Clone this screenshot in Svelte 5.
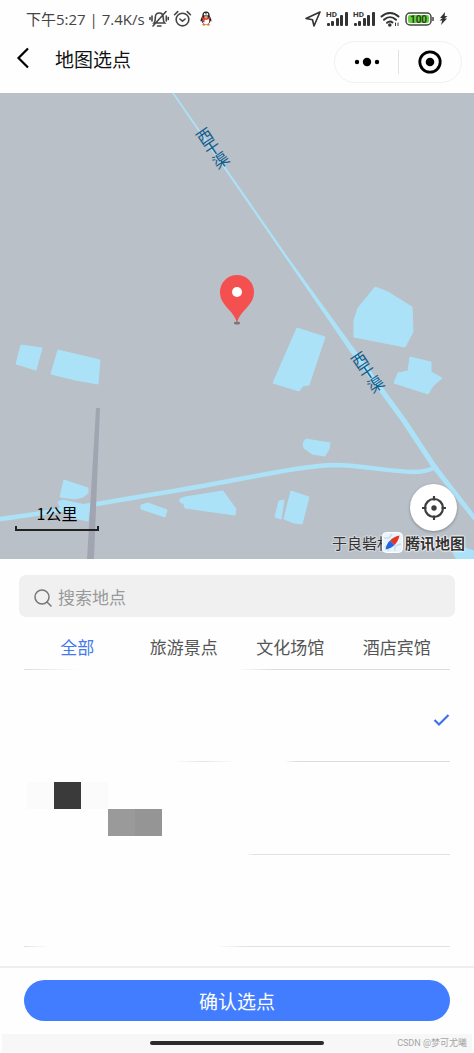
<script lang="ts">
	const water = [
		'21,252 42,255 36,277 16,271',
		'58,257 100,267 98,291 75,287 51,281',
		'64,387 88,395 88,400 83,404 75,406 60,404',
		'58,409 63,407 90,413 88,428 78,426 62,418',
		'141,412 148,410 167,417 165,424 141,416',
		'180,406 185,404 223,398 236,416 235,422 185,415 184,411 180,409',
		'306,346 330,350 329,356 325,363 312,361 304,355 303,350',
		'291,398 309,404 302,431 294,430 284,426',
		'279,408 284,407 281,426 275,424',
		'297,235 325,244 309,292 303,293 299,298 273,290',
		'375,194 388,199 412,214 413,239 405,254 354,244 354,227 358,215 367,204',
		'410,264 431,269 431,279 442,285 433,293 428,301 394,290 398,280 408,278',
		'453,460 461,454 475,458 475,467 457,467'
	];

	const canalLabels = [
		{ x: 205, y: 44 },
		{ x: 360, y: 268 }
	];

	const tabs = ['全部', '旅游景点', '文化场馆', '酒店宾馆'];
	let activeTab = $state('全部');

	const places = [
		{ id: 1, line: 'line-b' },
		{ id: 2, line: 'line-c' },
		{ id: 3, line: 'line-d' }
	];
	let selected = $state(1);
	let keyword = $state('');
</script>

{#snippet signal()}
	<svg class="signal" width="22" height="16" viewBox="0 0 22 16" fill="#333">
		<text x="0" y="6" font-size="8">HD</text>
		<rect x="1" y="12" width="3" height="3" rx="1" />
		<rect x="5" y="10" width="3" height="5" rx="1" />
		<rect x="10" y="7" width="3" height="8" rx="1" />
		<rect x="14" y="4" width="3" height="11" rx="1" />
		<rect x="19" y="1" width="3" height="14" rx="1" />
	</svg>
{/snippet}

<div class="page">
	<header>
		<div class="status">
			<div class="status-left">
				<span>下午5:27 | 7.4K/s</span>
				<svg width="20" height="18" viewBox="0 0 20 18" fill="none" stroke="#444" stroke-width="1.6" stroke-linecap="round">
					<path d="M5 13c1.4-1.500 1.300-3 1.300-5.500C6.300 4.500 8 3 10.200 3s4 1.500 4 4.500c0 2.500 0 4 1.500 5.500ZM8.500 16h3.500M4 16 17 1.500M3 6v5M1 7.500v2M17.300 6v5M19.300 7.500v2" />
				</svg>
				<svg width="19" height="18" viewBox="0 0 17 17" fill="none" stroke="#444" stroke-width="1.500" stroke-linecap="round" stroke-linejoin="round">
					<circle cx="8.500" cy="9" r="6" />
					<path d="M6 8.500 8.500 10.500 11 8.500M1 4.500 4 1.500M16 4.500l-3-3" />
				</svg>
				<svg class="penguin" width="12" height="15" viewBox="0 0 12 15">
					<path d="M6 0.500C3.300 0.500 2.200 2.600 2.300 5 1.200 7 0.300 8.700 0.600 10.500L1.600 9.900C2 12 3.500 13.500 6 13.500s4-1.500 4.400-3.600l1 .6c.3-1.800-.6-3.500-1.700-5.500C9.800 2.600 8.700 .5 6 .5Z" fill="#25272c" />
					<ellipse cx="6" cy="9.800" rx="3.300" ry="3.500" fill="#fff" />
					<ellipse cx="4.800" cy="3.200" rx="0.900" ry="1.300" fill="#fff" />
					<ellipse cx="7.200" cy="3.200" rx="0.900" ry="1.300" fill="#fff" />
					<ellipse cx="6" cy="5.200" rx="2" ry="0.700" fill="#f6a524" />
					<path d="M2 6c2.500 1.500 5.500 1.500 8 0l.3 1.600c-2 1.200-4 1.400-5.600 1.200l-.2 2.400H2.900l.3-2.900-1.500-.7Z" fill="#e9342c" />
					<path d="M2 13.800c0-1.200 3.500-1.200 3.500 0S2 14.800 2 13.800ZM6.500 13.800c0-1.200 3.500-1.200 3.500 0s-3.500 1-3.500 0Z" fill="#ee7625" />
				</svg>
			</div>
			<div class="status-right">
				<svg width="16" height="16" viewBox="0 0 16 16" fill="none" stroke="#333" stroke-width="1.600" stroke-linejoin="round">
					<path d="M15 1 1 7.500l6.500 1.300L9 15Z" />
				</svg>
				{@render signal()}
				{@render signal()}
				<svg width="20" height="16" viewBox="0 0 20 16" fill="none" stroke="#333" stroke-width="2" stroke-linecap="round">
					<path d="M1.500 5.500C6.500 .8 13.500 .8 18.500 5.500M4 8.800c3.600-3.300 8.400-3.300 12 0M7 11.800c1.800-1.500 4-1.500 5.500-.3" />
					<circle cx="9.800" cy="14" r="0.800" fill="#333" />
					<path d="M15.500 12v2.500M18 12v2.500" stroke-width="1" />
				</svg>
				<svg class="battery" width="29" height="14" viewBox="0 0 29 14">
					<rect x="1" y="1" width="25" height="12" rx="4" fill="#fff" stroke="#444" stroke-width="1.500" />
					<rect x="3" y="3" width="21" height="8" rx="2" fill="#6bd042" />
					<text x="13.500" y="10.500" font-size="10" font-weight="700" text-anchor="middle" fill="#1c4a10">100</text>
					<path d="M28 5v4" stroke="#444" stroke-width="1.500" />
				</svg>
				<svg width="9" height="13" viewBox="0 0 9 13" fill="#333">
					<path d="M6 0 1 6h2.500L.5 8.500h2.700L2 13l6-6.500H5.500L8.500 4H5.700Z" />
				</svg>
			</div>
		</div>
		<nav>
			<button class="back" aria-label="返回">
				<svg width="14" height="22" viewBox="0 0 14 22" fill="none" stroke="#000" stroke-width="2.200">
					<path d="M12 1.500 2.500 11l9.500 9.500" />
				</svg>
			</button>
			<h1>地图选点</h1>
			<div class="capsule">
				<button aria-label="更多">
					<svg width="26" height="10" viewBox="0 0 26 10">
						<circle cx="3" cy="5" r="2.200" />
						<circle cx="13" cy="5" r="4.200" />
						<circle cx="23" cy="5" r="2.200" />
					</svg>
				</button>
				<button aria-label="关闭">
					<svg width="24" height="24" viewBox="0 0 24 24">
						<circle cx="12" cy="12" r="10.200" fill="none" stroke="#000" stroke-width="2.800" />
						<circle cx="12" cy="12" r="4.300" />
					</svg>
				</button>
			</div>
		</nav>
	</header>

	<div class="map">
		<svg class="canvas" viewBox="0 0 474 466" preserveAspectRatio="xMidYMid slice">
			<g fill="#ace2f8" stroke="#ace2f8" stroke-linejoin="round">
				{#each water as points}
					<polygon {points} />
				{/each}
				<polygon
					stroke="none"
					points="172,0 174,0 290,167 356,258 406,326 437,373 474,421 474,428 432,375 401,328 351,260 287,167"
				/>
				<path
					d="M0 426C40 421 80 414 120 407S200 394 234 387C270 381 300 373 334 372C360 372 385 378 414 379Q428 379 437 373"
					fill="none"
					stroke-width="4.500"
				/>
			</g>
			<polygon points="96,315 100,315 94,466 87,466" fill="#a1a5b2" />
			{#each canalLabels as label}
				<g class="canal" transform="translate({label.x} {label.y}) rotate(-34)">
					<text y="5">西</text>
					<text y="19">干</text>
					<text y="34">渠</text>
				</g>
			{/each}
			<text class="village" x="332" y="456">于良砦村</text>
			<ellipse cx="237" cy="230" rx="3" ry="1.500" fill="#777" />
			<path d="M237 230C234 217 220 213 220 199a17 17 0 0 1 34 0C254 213 240 217 237 230Z" fill="#f4504f" />
			<circle cx="237" cy="199" r="5" fill="#fff" />
		</svg>

		<div class="scale">
			<span>1公里</span>
			<i></i>
		</div>

		<button class="locate" aria-label="定位">
			<svg width="26" height="26" viewBox="0 0 26 26" fill="none" stroke="#3d3d3d" stroke-width="2.200">
				<circle cx="13" cy="13" r="9" />
				<circle cx="13" cy="13" r="2.700" fill="#3d3d3d" stroke="none" />
				<path d="M13 1v4.500M13 20.500v4.500M1 13h4.500M20.500 13h4.500" />
			</svg>
		</button>

		<div class="brand">
			<svg width="21" height="21" viewBox="0 0 21 21">
				<rect x="0.500" y="0.500" width="20" height="20" rx="4" fill="#e9f4fc" stroke="#fff" />
				<path d="M2 6h5l3-4M13 19v-5l6-2M3 14l4 5" stroke="#c8def0" stroke-width="1.500" fill="none" />
				<path d="M17.500 3.500C13 4.500 10.500 6 8 8.500l4.500 4.500C15 10.500 16.500 8 17.500 3.500Z" fill="#ea3323" />
				<path d="M3.500 17.500C4.500 13 5.500 11 8 8.500l4.500 4.500C10 15.500 8 16.500 3.500 17.500Z" fill="#2166e0" />
			</svg>
			<span>腾讯地图</span>
		</div>
	</div>

	<main>
		<label class="search">
			<svg width="18" height="18" viewBox="0 0 18 18" fill="none" stroke="#777" stroke-width="1.500" stroke-linecap="round">
				<circle cx="8" cy="8" r="7" />
				<path d="m13 13 4 4" />
			</svg>
			<input type="text" placeholder="搜索地点" aria-label="搜索地点" bind:value={keyword} />
		</label>

		<div class="tabs line-a">
			{#each tabs as tab}
				<button class:active={tab === activeTab} onclick={() => (activeTab = tab)}>{tab}</button>
			{/each}
		</div>

		<div class="places">
			{#each places as place (place.id)}
				<button class="place {place.line}" aria-label="地点 {place.id}" onclick={() => (selected = place.id)}>
					{#if place.id === 2}
						<span class="mosaic">
							<i class="faint"></i>
							<i class="dark"></i>
							<i class="faint"></i>
							<i class="mid"></i>
						</span>
					{/if}
					{#if place.id === selected}
						<svg class="check" width="17" height="14" viewBox="0 0 17 14" fill="none" stroke="#3f72e8" stroke-width="2.200">
							<path d="m1.500 7 4.500 4.500L15.500 2" />
						</svg>
					{/if}
				</button>
			{/each}
		</div>
	</main>

	<footer>
		<button class="confirm">确认选点</button>
		<div class="home">
			<i></i>
			<span>CSDN @梦可尤曦</span>
		</div>
	</footer>
</div>

<style>
	:global(body) {
		background: #fefefe;
	}

	.page {
		font-family: 'Noto Sans CJK SC', sans-serif;
		color: #111;
	}
	svg {
		display: block;
		flex-shrink: 0;
	}
	button {
		padding: 0;
		border: 0;
		background: none;
		font: inherit;
		color: inherit;
		cursor: pointer;
	}

	.status {
		display: flex;
		justify-content: space-between;
		align-items: center;
		height: 37px;
		padding: 0 26px 0 26px;
		font-family: 'Open Sans', 'Noto Sans CJK SC', sans-serif;
		font-size: 15px;
		line-height: 20px;
		color: #444;
	}
	.status-left,
	.status-right {
		display: flex;
		align-items: center;
		gap: 5px;
	}
	.status-left {
		gap: 4px;
		white-space: nowrap;
	}
	.penguin {
		margin-left: 4px;
	}
	.signal text {
		font-family: Roboto, sans-serif;
		font-weight: 700;
	}
	.battery text {
		font-family: Roboto, sans-serif;
	}

	nav {
		display: flex;
		align-items: center;
		height: 56px;
		padding: 0 12px 0 16px;
	}
	.back {
		display: flex;
		width: 39px;
		margin-bottom: 14px;
	}
	h1 {
		flex: 1;
		margin: 0 0 12px;
		font-size: 19px;
		line-height: 28px;
		font-weight: 400;
	}
	.capsule {
		display: flex;
		width: 126px;
		height: 40px;
		margin-bottom: 6px;
		border: 1px solid #f1f1f1;
		border-radius: 21px;
	}
	.capsule button {
		display: flex;
		flex: 1;
		align-items: center;
		justify-content: center;
	}
	.capsule button + button {
		position: relative;
	}
	.capsule button + button::before {
		content: '';
		position: absolute;
		left: 0;
		top: 8px;
		bottom: 8px;
		width: 1px;
		background: #e2e2e2;
	}

	.map {
		position: relative;
		aspect-ratio: 474 / 466;
		overflow: hidden;
		background: #b9c0c8;
	}
	.canvas {
		width: 100%;
		height: 100%;
	}
	.canal {
		font-size: 16px;
		text-anchor: middle;
		fill: #0f5c8c;
	}
	.village {
		font-size: 15px;
		fill: #333;
		stroke: #d3d7dc;
		stroke-width: 2px;
		paint-order: stroke;
	}
	.scale {
		position: absolute;
		left: 15px;
		bottom: 28px;
		width: 84px;
		text-align: center;
		font-size: 16px;
		line-height: 26px;
		color: #000;
	}
	.scale i {
		display: block;
		height: 3px;
		border: 2px solid #222;
		border-top: 0;
	}
	.locate {
		position: absolute;
		right: 17px;
		bottom: 28px;
		display: flex;
		align-items: center;
		justify-content: center;
		width: 47px;
		height: 47px;
		border-radius: 50%;
		background: #fff;
		box-shadow: 0 1px 3px rgba(0, 0, 0, 0.3);
	}
	.brand {
		position: absolute;
		right: 9px;
		bottom: 6px;
		display: flex;
		align-items: center;
		gap: 2px;
		font-size: 15px;
		line-height: 21px;
		font-weight: 700;
		color: #333;
		text-shadow: 0 0 2px #fff, 0 0 2px #fff, 0 0 2px #fff, 0 0 2px #fff;
	}

	.search {
		display: flex;
		align-items: center;
		gap: 6px;
		height: 42px;
		margin: 16px 19px 0;
		padding: 0 15px;
		border-radius: 7px;
		background: #f0f0f0;
	}
	.search svg {
		margin-top: 4px;
	}
	.search input {
		flex: 1;
		min-width: 0;
		padding: 0;
		border: 0;
		outline: 0;
		background: none;
		font: inherit;
		font-size: 17px;
		color: #333;
	}
	.search input::placeholder {
		color: #999;
	}

	.tabs {
		display: flex;
		height: 53px;
		margin: 0 24px;
	}
	.tabs button {
		flex: 1;
		padding-top: 6px;
		font-size: 17px;
		color: #555;
	}
	.tabs button.active {
		color: #4479ee;
	}

	/* dividers fade out where the row content is masked */
	.line-a,
	.line-b,
	.line-c,
	.line-d {
		background-repeat: no-repeat;
		background-size: 100% 1px;
		background-position: bottom;
	}
	.line-a {
		background-image: linear-gradient(90deg, #ddd, transparent 13%, transparent 50%, #ddd 58%);
	}
	.line-b {
		background-image: linear-gradient(90deg, transparent 35%, #e4e4e4 42%, transparent 50%, transparent 61%, #ddd 64%);
	}
	.line-c {
		background-image: linear-gradient(90deg, transparent 52%, #e2e2e2 54%);
	}
	.line-d {
		background-image: linear-gradient(90deg, #e2e2e2, transparent 6%, transparent 45%, #e2e2e2 52%);
	}

	.places {
		display: flex;
		flex-direction: column;
		margin: 0 24px;
	}
	.place {
		display: flex;
		align-items: center;
		height: 92px;
	}
	.place:nth-child(2) {
		height: 93px;
	}
	.check {
		margin: 8px 0 0 auto;
	}
	.mosaic {
		display: grid;
		grid-template-columns: repeat(5, 27px);
		grid-auto-rows: 27px;
		margin: 0 0 0 3px;
	}
	.mosaic .faint {
		background: #fbfbfb;
	}
	.mosaic .dark {
		background: #3a3a3a;
	}
	.mosaic .mid {
		grid-area: 2 / 4 / 3 / 6;
		background: linear-gradient(90deg, #9a9a9a 50%, #959595 50%);
	}

	footer {
		margin-top: 19px;
		border-top: 2px solid #eee;
	}
	.confirm {
		display: block;
		width: calc(100% - 48px);
		height: 41px;
		margin: 12px 24px 13px;
		border-radius: 21px;
		background: #437dff;
		font-size: 19px;
		color: #fff;
	}
	.home {
		position: relative;
		display: flex;
		align-items: center;
		justify-content: center;
		height: 18px;
		margin: 0 2px;
		background: #f7f7f7;
	}
	.home i {
		width: 37%;
		height: 4px;
		border-radius: 2px;
		background: #2b2b2b;
	}
	.home span {
		position: absolute;
		right: 5px;
		font-family: Roboto, 'Noto Sans CJK SC', sans-serif;
		font-size: 9px;
		line-height: 20px;
		color: #a5a5a5;
	}
</style>
